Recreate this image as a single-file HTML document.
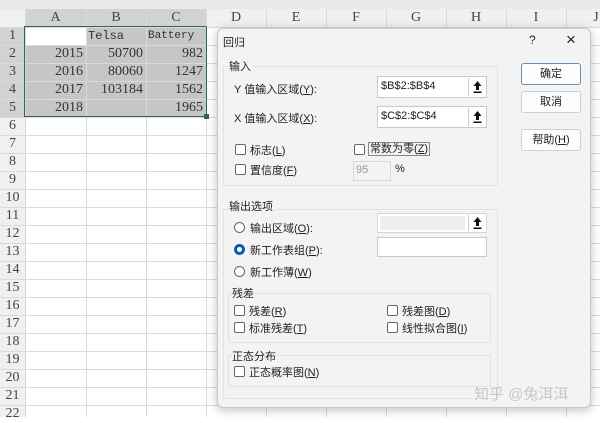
<!DOCTYPE html>
<html><head><meta charset="utf-8"><style>
*{margin:0;padding:0;box-sizing:border-box}
body{width:600px;height:417px;overflow:hidden;background:#fff;position:relative;font-family:"Liberation Sans","Noto Sans CJK SC",sans-serif;font-size:11px;color:#222}
.a{position:absolute}
.vl{position:absolute;top:9px;bottom:0;width:1px;background:#dadada}
.hl{position:absolute;left:0;right:0;height:1px;background:#dadada}
.ch{position:absolute;top:9px;height:18px;line-height:18px;text-align:center;font-family:"Liberation Serif",serif;font-size:14px;color:#444}
.rh{position:absolute;left:0;width:25px;height:18px;line-height:18px;text-align:center;font-family:"Liberation Serif",serif;font-size:14px;color:#444}
.num{position:absolute;height:18px;line-height:18px;text-align:right;font-family:"Liberation Serif",serif;font-size:14px;color:#333}
.dlg{position:absolute;left:217px;top:28px;width:374px;height:380px;background:#f3f3f3;border:1px solid #c8c8c8;border-radius:6px;box-shadow:0 2px 10px rgba(0,0,0,.25)}
.t{position:absolute;white-space:nowrap;font-size:11px;color:#222}
.grp{position:absolute;border:1px solid #e2e2e2;border-radius:2px}
.box{position:absolute;background:#fff;border:1px solid #c9c9c9}
.arr{position:absolute;right:1px;top:1px;bottom:1px;width:17px;background:#fff;border-left:1px solid #ccc}
.arr svg{position:absolute;left:4px;top:50%;margin-top:-6px}
.cb{position:absolute;width:11px;height:11px;border:1px solid #666;border-radius:2px;background:#fff}
.rb{position:absolute;width:11px;height:11px;border:1px solid #666;border-radius:50%;background:#fff}
.btn{position:absolute;width:60px;height:22px;background:#fdfdfd;border:1px solid #d0d0d0;border-radius:3px;text-align:center;line-height:20px;font-size:11px}
u{text-decoration:underline}
</style></head><body>
<div class="a" style="left:0;top:0;width:600px;height:9px;background:#e9e9e9"></div>
<div class="a" style="left:0;top:9px;width:600px;height:18px;background:#f0f0f0"></div>
<div class="a" style="left:0;top:27px;width:25px;height:390px;background:#f0f0f0"></div>
<div class="a" style="left:25px;top:9px;width:181px;height:18px;background:#d2d2d2"></div>
<div class="a" style="left:0;top:27px;width:25px;height:90px;background:#d2d2d2"></div>
<div class="a" style="left:25px;top:27px;width:181px;height:90px;background:#c6c6c6"></div>
<div class="a" style="left:26px;top:28px;width:60px;height:17px;background:#fff"></div>
<div class="vl" style="left:25px"></div><div class="vl" style="left:86px"></div><div class="vl" style="left:146px"></div><div class="vl" style="left:206px"></div><div class="vl" style="left:266px"></div><div class="vl" style="left:326px"></div><div class="vl" style="left:386px"></div><div class="vl" style="left:446px"></div><div class="vl" style="left:506px"></div><div class="vl" style="left:566px"></div>
<div class="hl" style="top:27px"></div><div class="hl" style="top:45px"></div><div class="hl" style="top:63px"></div><div class="hl" style="top:81px"></div><div class="hl" style="top:99px"></div><div class="hl" style="top:117px"></div><div class="hl" style="top:135px"></div><div class="hl" style="top:153px"></div><div class="hl" style="top:171px"></div><div class="hl" style="top:189px"></div><div class="hl" style="top:207px"></div><div class="hl" style="top:225px"></div><div class="hl" style="top:243px"></div><div class="hl" style="top:261px"></div><div class="hl" style="top:279px"></div><div class="hl" style="top:297px"></div><div class="hl" style="top:315px"></div><div class="hl" style="top:333px"></div><div class="hl" style="top:351px"></div><div class="hl" style="top:369px"></div><div class="hl" style="top:387px"></div><div class="hl" style="top:405px"></div>
<div class="ch" style="left:25px;width:61px">A</div><div class="ch" style="left:86px;width:60px">B</div><div class="ch" style="left:146px;width:60px">C</div><div class="ch" style="left:206px;width:60px">D</div><div class="ch" style="left:266px;width:60px">E</div><div class="ch" style="left:326px;width:60px">F</div><div class="ch" style="left:386px;width:60px">G</div><div class="ch" style="left:446px;width:60px">H</div><div class="ch" style="left:506px;width:60px">I</div><div class="ch" style="left:566px;width:60px">J</div>
<div class="rh" style="top:27px">1</div><div class="rh" style="top:45px">2</div><div class="rh" style="top:63px">3</div><div class="rh" style="top:81px">4</div><div class="rh" style="top:99px">5</div><div class="rh" style="top:117px">6</div><div class="rh" style="top:135px">7</div><div class="rh" style="top:153px">8</div><div class="rh" style="top:171px">9</div><div class="rh" style="top:189px">10</div><div class="rh" style="top:207px">11</div><div class="rh" style="top:225px">12</div><div class="rh" style="top:243px">13</div><div class="rh" style="top:261px">14</div><div class="rh" style="top:279px">15</div><div class="rh" style="top:297px">16</div><div class="rh" style="top:315px">17</div><div class="rh" style="top:333px">18</div><div class="rh" style="top:351px">19</div><div class="rh" style="top:369px">20</div><div class="rh" style="top:387px">21</div><div class="rh" style="top:405px">22</div>
<div class="num" style="left:88px;top:27px;font-family:'Liberation Mono',monospace;font-size:12px;text-align:left">Telsa</div>
<div class="num" style="left:148px;top:27px;font-family:'Liberation Mono',monospace;font-size:11px;text-align:left">Battery</div>
<div class="num" style="left:26px;width:57px;top:45px">2015</div><div class="num" style="left:86px;width:57px;top:45px">50700</div><div class="num" style="left:146px;width:57px;top:45px">982</div>
<div class="num" style="left:26px;width:57px;top:63px">2016</div><div class="num" style="left:86px;width:57px;top:63px">80060</div><div class="num" style="left:146px;width:57px;top:63px">1247</div>
<div class="num" style="left:26px;width:57px;top:81px">2017</div><div class="num" style="left:86px;width:57px;top:81px">103184</div><div class="num" style="left:146px;width:57px;top:81px">1562</div>
<div class="num" style="left:26px;width:57px;top:99px">2018</div><div class="num" style="left:146px;width:57px;top:99px">1965</div>
<div class="a" style="left:24px;top:26px;width:183px;height:91px;border:1.5px solid #2f6b46"></div>
<div class="a" style="left:204px;top:114px;width:5px;height:5px;background:#2f6b46"></div>

<div class="dlg">
<div class="t" style="left:5px;top:5px">回归</div>
<div class="t" style="left:311px;top:4px;font-size:12px">?</div>
<div class="t" style="left:348px;top:1px;font-size:17px">×</div>
<div class="grp" style="left:5px;top:37px;width:275px;height:120px"></div>
<div class="t" style="left:10px;top:29px;background:#f3f3f3;padding:0 1px">输入</div>
<div class="t" style="left:16px;top:52px">Y 值输入区域(<u>Y</u>):</div>
<div class="box" style="left:159px;top:47px;width:110px;height:22px"><div class="t" style="left:3px;top:3px">$B$2:$B$4</div><div class="arr"><svg width="9" height="12" viewBox="0 0 9 12"><path d="M4.5 0L8.5 5H6V9H3V5H0.5Z" fill="#111"/><rect x="0.5" y="10.5" width="8" height="1.5" fill="#111"/></svg></div></div>
<div class="t" style="left:16px;top:81px">X 值输入区域(<u>X</u>):</div>
<div class="box" style="left:159px;top:77px;width:110px;height:22px"><div class="t" style="left:3px;top:3px">$C$2:$C$4</div><div class="arr"><svg width="9" height="12" viewBox="0 0 9 12"><path d="M4.5 0L8.5 5H6V9H3V5H0.5Z" fill="#111"/><rect x="0.5" y="10.5" width="8" height="1.5" fill="#111"/></svg></div></div>
<div class="cb" style="left:17px;top:115px"></div><div class="t" style="left:32px;top:113px">标志(<u>L</u>)</div>
<div class="cb" style="left:136px;top:115px"></div><div class="t" style="left:150px;top:113px;border:1px solid #888;padding:0 1px;line-height:12px">常数为零(<u>Z</u>)</div>
<div class="cb" style="left:17px;top:135px"></div><div class="t" style="left:32px;top:133px">置信度(<u>F</u>)</div>
<div class="box" style="left:135px;top:132px;width:38px;height:20px;background:#f3f3f3;border-color:#d6d6d6"><div class="t" style="left:2px;top:2px;color:#999">95</div></div>
<div class="t" style="left:177px;top:134px">%</div>
<div class="btn" style="left:303px;top:34px;border:1.5px solid #6a8fb0">确定</div>
<div class="btn" style="left:303px;top:62px">取消</div>
<div class="btn" style="left:303px;top:100px">帮助(<u>H</u>)</div>
<div class="grp" style="left:5px;top:180px;width:275px;height:190px"></div>
<div class="t" style="left:10px;top:169px;background:#f3f3f3;padding:0 1px">输出选项</div>
<div class="rb" style="left:16px;top:193px"></div><div class="t" style="left:32px;top:191px">输出区域(<u>O</u>):</div>
<div class="box" style="left:159px;top:184px;width:110px;height:20px;border-color:#d6d6d6"><div class="a" style="left:2px;top:2px;width:85px;height:14px;background:#eee"></div><div class="arr"><svg width="9" height="12" viewBox="0 0 9 12"><path d="M4.5 0L8.5 5H6V9H3V5H0.5Z" fill="#111"/><rect x="0.5" y="10.5" width="8" height="1.5" fill="#111"/></svg></div></div>
<div class="rb" style="left:16px;top:215px;border:3px solid #0a5cb0"></div><div class="t" style="left:32px;top:213px">新工作表组(<u>P</u>):</div>
<div class="box" style="left:159px;top:208px;width:110px;height:20px"></div>
<div class="rb" style="left:16px;top:237px"></div><div class="t" style="left:32px;top:235px">新工作薄(<u>W</u>)</div>
<div class="grp" style="left:10px;top:264px;width:263px;height:50px"></div>
<div class="t" style="left:14px;top:256px;background:#f3f3f3">残差</div>
<div class="cb" style="left:16px;top:276px"></div><div class="t" style="left:31px;top:274px">残差(<u>R</u>)</div>
<div class="cb" style="left:169px;top:276px"></div><div class="t" style="left:184px;top:274px">残差图(<u>D</u>)</div>
<div class="cb" style="left:16px;top:293px"></div><div class="t" style="left:31px;top:291px">标准残差(<u>T</u>)</div>
<div class="cb" style="left:169px;top:293px"></div><div class="t" style="left:184px;top:291px">线性拟合图(<u>I</u>)</div>
<div class="grp" style="left:10px;top:326px;width:263px;height:32px"></div>
<div class="t" style="left:14px;top:319px;background:#f3f3f3">正态分布</div>
<div class="cb" style="left:16px;top:337px"></div><div class="t" style="left:31px;top:335px">正态概率图(<u>N</u>)</div>
</div>
<div class="t" style="left:474px;top:383px;font-size:15px;color:#c4c4c4;text-shadow:0 0 1px #fff">知乎 @兔洱洱</div>
</body></html>
